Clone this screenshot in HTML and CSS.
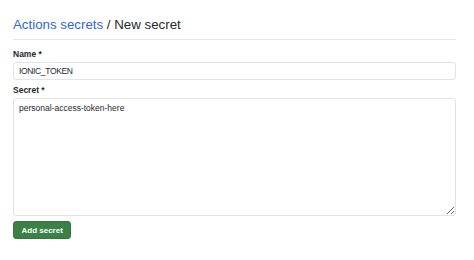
FILE: index.html
```html
<!DOCTYPE html>
<html lang="en">
<head>
<meta charset="utf-8">
<title>New secret</title>
<link rel="stylesheet" href="styles.css">
</head>
<body>
<main class="page">
  <h2 class="subhead"><a class="crumb" href="#">Actions secrets</a> / New secret</h2>
  <form class="secret-form">
    <div class="group group-first">
      <label class="label" for="name">Name *</label>
      <input class="field input" id="name" type="text" value="IONIC_TOKEN">
    </div>
    <div class="group">
      <label class="label" for="secret">Secret *</label>
      <textarea class="field area" id="secret">personal-access-token-here</textarea>
    </div>
    <button class="btn" type="button">Add secret</button>
  </form>
</main>
</body>
</html>
```

FILE: styles.css
```css
html, body {
  margin: 0;
  background: #ffffff;
}
body {
  font-family: "Liberation Sans", Arial, sans-serif;
  color: #24292f;
}
.page {
  padding: 0 18px 0 13px;
}
.subhead {
  margin: 0;
  padding: 16px 0 6px;
  font-size: 13.3px;
  line-height: 17px;
  font-weight: 400;
  color: #24292f;
  border-bottom: 1px solid #e6e7e9;
}
.crumb {
  color: #3366d6;
  text-decoration: none;
}
.secret-form {
  display: flex;
  flex-direction: column;
  align-items: flex-start;
}
.group {
  display: flex;
  flex-direction: column;
  align-self: stretch;
  margin-top: 5px;
}
.group-first {
  margin-top: 9px;
}
.label {
  font-size: 8.5px;
  line-height: 11px;
  font-weight: 700;
  margin-bottom: 2px;
}
.field {
  box-sizing: border-box;
  width: 100%;
  margin: 0;
  padding: 0 5px;
  font-family: "Liberation Sans", Arial, sans-serif;
  font-size: 8.5px;
  color: #24292f;
  background: #ffffff;
  border: 1px solid #e1e3e6;
  border-radius: 3px;
  outline: none;
}
.input {
  height: 18px;
  letter-spacing: -0.35px;
}
.area {
  display: block;
  height: 118px;
  padding: 3px 5px;
  line-height: 12.75px;
  resize: vertical;
}
.btn {
  margin-top: 5px;
  height: 18px;
  padding: 0 7.5px;
  font-family: "Liberation Sans", Arial, sans-serif;
  font-size: 8px;
  font-weight: 700;
  color: #ffffff;
  background: #3b8045;
  border: 1px solid #367541;
  border-radius: 3px;
}
```
